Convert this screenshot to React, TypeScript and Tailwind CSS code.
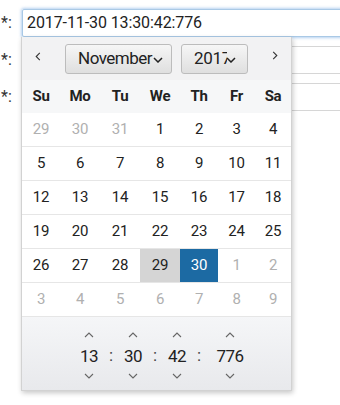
import React from 'react';

const font = { fontFamily: 'Roboto, "Noto Sans", sans-serif' };

type Day = { n: number; muted?: boolean; state?: 'hover' | 'selected' };

const weeks: Day[][] = [
  [{ n: 29, muted: true }, { n: 30, muted: true }, { n: 31, muted: true }, { n: 1 }, { n: 2 }, { n: 3 }, { n: 4 }],
  [{ n: 5 }, { n: 6 }, { n: 7 }, { n: 8 }, { n: 9 }, { n: 10 }, { n: 11 }],
  [{ n: 12 }, { n: 13 }, { n: 14 }, { n: 15 }, { n: 16 }, { n: 17 }, { n: 18 }],
  [{ n: 19 }, { n: 20 }, { n: 21 }, { n: 22 }, { n: 23 }, { n: 24 }, { n: 25 }],
  [{ n: 26 }, { n: 27 }, { n: 28 }, { n: 29, state: 'hover' }, { n: 30, state: 'selected' }, { n: 1, muted: true }, { n: 2, muted: true }],
  [3, 4, 5, 6, 7, 8, 9].map((n) => ({ n, muted: true })),
];

const weekdays = ['Su', 'Mo', 'Tu', 'We', 'Th', 'Fr', 'Sa'];

function Chevron({ dir, className, width = 1.2 }: { dir: 'up' | 'down' | 'left' | 'right'; className?: string; width?: number }) {
  const pts = {
    up: '1,5 5,1 9,5',
    down: '1,1 5,5 9,1',
    left: '5,1 1,5 5,9',
    right: '1,1 5,5 1,9',
  }[dir];
  const box = dir === 'up' || dir === 'down' ? '0 0 10 6' : '0 0 6 10';
  return (
    <svg viewBox={box} className={className} fill="none" stroke="currentColor" strokeWidth={width}>
      <polyline points={pts} />
    </svg>
  );
}

function TimeUnit({ value, width }: { value: string; width: string }) {
  return (
    <div className={`flex flex-col items-center ${width}`}>
      <Chevron dir="up" className="w-[10px] h-[6px] text-[#666] mt-[15px]" width={1.1} />
      <span className="text-[17px] leading-[20px] tracking-[-0.5px] text-[#222] mt-[8px]">{value}</span>
      <Chevron dir="down" className="w-[10px] h-[6px] text-[#666] mt-[7px]" width={1.1} />
    </div>
  );
}

function Colon() {
  return <span className="w-[14px] text-center text-[17px] leading-[20px] text-[#444] mt-[28px]">:</span>;
}

export default function App() {
  return (
    <div className="relative w-[340px] h-[405px] overflow-hidden bg-white" style={font}>
      {/* form rows */}
      <div className="flex flex-col gap-[9px] -mt-[28px]">
        {[0, 1, 2, 3].map((i) => (
          <div key={i} className="flex items-center h-[28px]">
            <span className="w-[22px] shrink-0 pl-[1px] text-[16px] text-[#333]">{i > 0 ? '*:' : ''}</span>
            <div
              className={`w-[340px] shrink-0 h-[28px] border rounded-[2px] flex items-center pl-[4px] ${
                i === 1
                  ? 'border-[#a9c9e6] shadow-[0_0_3px_1px_rgba(120,170,225,0.55)]'
                  : 'border-[#d6d6d6]'
              }`}
            >
              {i === 1 && (
                <span className="text-[16px] tracking-[-0.1px] text-[#222]">2017-11-30 13:30:42:776</span>
              )}
            </div>
          </div>
        ))}
      </div>

      {/* date picker popup */}
      <div className="absolute left-[21px] top-[37px] w-[271px] border border-t-0 border-[#d2d2d2] bg-white shadow-[1px_2px_5px_rgba(0,0,0,0.22)]">
        {/* header */}
        <div className="h-[43px] bg-[#f2f2f3] flex items-start pl-[10px] pt-[7px]">
          <div className="w-[12px] flex justify-center mt-[8px]">
            <Chevron dir="left" className="w-[6px] h-[9px] text-[#333]" />
          </div>
          <div className="ml-[21px] w-[107px] h-[30px] rounded-[3px] border border-[#bcbcbc] bg-gradient-to-b from-[#f6f6f6] to-[#dfdfdf] flex items-center pl-[12px]">
            <span className="text-[17px] tracking-[-0.5px] text-[#222]">November</span>
            <Chevron dir="down" className="w-[10px] h-[6px] text-[#222] ml-[1px] mt-[2px]" width={1.5} />
          </div>
          <div className="ml-[9px] w-[67px] h-[30px] rounded-[3px] border border-[#bcbcbc] bg-gradient-to-b from-[#f6f6f6] to-[#dfdfdf] flex items-center pl-[12px]">
            <span className="w-[33px] overflow-hidden whitespace-nowrap text-[17px] tracking-[-0.3px] text-[#222]">2017</span>
            <Chevron dir="down" className="w-[10px] h-[6px] text-[#222] -ml-[1px] mt-[2px]" width={1.5} />
          </div>
          <div className="ml-[22px] w-[10px] flex justify-center mt-[7px]">
            <Chevron dir="right" className="w-[6px] h-[9px] text-[#333]" />
          </div>
        </div>

        {/* weekdays */}
        <div className="grid grid-cols-[38px_40px_40px_40px_38px_37px_36px] h-[33px] bg-[#f6f7f8] items-center">
          {weekdays.map((d) => (
            <span key={d} className="text-center text-[15px] font-bold tracking-[-0.3px] text-[#222]">
              {d}
            </span>
          ))}
        </div>

        {/* days */}
        {weeks.map((week, wi) => (
          <div key={wi} className="grid grid-cols-[38px_40px_40px_40px_38px_37px_36px] h-[34px] border-b border-[#e6e6e6]">
            {week.map((d, di) => (
              <div
                key={di}
                className={`flex items-center justify-center text-[15px] tracking-[-0.2px] ${
                  d.state === 'selected'
                    ? 'bg-[#1c6aa3] text-white'
                    : d.state === 'hover'
                    ? 'bg-[#d5d5d5] text-[#222]'
                    : d.muted
                    ? 'text-[#b0b0b0]'
                    : 'text-[#222]'
                }`}
              >
                {d.n}
              </div>
            ))}
          </div>
        ))}

        {/* time */}
        <div className="h-[73px] bg-gradient-to-b from-[#f5f6f8] to-[#e8e9ec] flex items-start pl-[52px]">
          <TimeUnit value="13" width="w-[30px]" />
          <Colon />
          <TimeUnit value="30" width="w-[30px]" />
          <Colon />
          <TimeUnit value="42" width="w-[30px]" />
          <Colon />
          <TimeUnit value="776" width="w-[48px]" />
        </div>
      </div>
    </div>
  );
}
